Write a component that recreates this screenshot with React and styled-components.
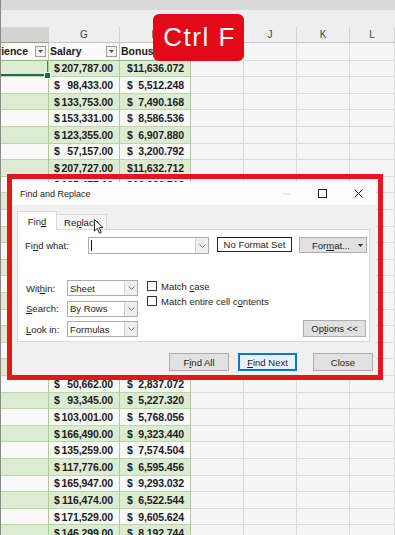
import React from 'react';
import styled, { createGlobalStyle, css } from 'styled-components';

const Global = createGlobalStyle`
  html, body { margin: 0; padding: 0; background: #f3f3f3; overflow: hidden; }
  * { box-sizing: border-box; }
`;

const COLS = '48px 71px 71px 53px 53px 53px 1fr';
const ROW_H = 16.6;

const rows = [
  ['207,787.00', '11,636.072'],
  ['98,433.00', '5,512.248'],
  ['133,753.00', '7,490.168'],
  ['153,331.00', '8,586.536'],
  ['123,355.00', '6,907.880'],
  ['57,157.00', '3,200.792'],
  ['207,727.00', '11,632.712'],
  ['185,477.00', '10,386.712'],
  ['112,640.00', '6,307.840'],
  ['74,915.00', '4,195.240'],
  ['158,302.00', '8,864.912'],
  ['96,780.00', '5,419.680'],
  ['142,055.00', '7,955.080'],
  ['61,430.00', '3,440.080'],
  ['188,210.00', '10,539.760'],
  ['127,905.00', '7,162.680'],
  ['83,615.00', '4,682.440'],
  ['154,720.00', '8,664.320'],
  ['109,338.00', '6,122.928'],
  ['50,662.00', '2,837.072'],
  ['93,345.00', '5,227.320'],
  ['103,001.00', '5,768.056'],
  ['166,490.00', '9,323.440'],
  ['135,259.00', '7,574.504'],
  ['117,776.00', '6,595.456'],
  ['165,947.00', '9,293.032'],
  ['116,474.00', '6,522.544'],
  ['171,529.00', '9,605.624'],
  ['146,299.00', '8,192.744'],
];

const Screen = styled.div`
  position: relative;
  width: 395px;
  height: 535px;
  overflow: hidden;
  background: #f3f3f3;
  font-family: "Liberation Sans", Arial, sans-serif;
`;

/* ---------- spreadsheet ---------- */
const Sheet = styled.div`
  display: flex;
  flex-direction: column;
  border-left: 1px solid #8a8a8a;
`;

const TopStrip = styled.div`
  height: 10px;
  flex: none;
  background: #d9d9d9;
`;

const RibbonGap = styled.div`
  height: 17px;
  flex: none;
  background: #ededed;
`;

const Row = styled.div`
  display: grid;
  grid-template-columns: ${COLS};
  height: ${p => p.$h}px;
  flex: none;
`;

const ColHead = styled.div`
  display: flex;
  align-items: center;
  justify-content: center;
  background: ${p => (p.$active ? '#d3d3d3' : '#eeeeee')};
  border-right: 1px solid #d2d2d2;
  border-bottom: 1px solid ${p => (p.$active ? '#7fae6a' : '#c6c6c6')};
  font-size: 10px;
  color: #444;
`;

const HeadCell = styled.div`
  display: flex;
  align-items: center;
  justify-content: ${p => (p.$clipLeft ? 'flex-end' : 'flex-start')};
  gap: 7px;
  overflow: hidden;
  padding: 0 2px 0 1px;
  background: #fafafa;
  border-right: 1px solid #b5d6a1;
  border-bottom: 1px solid #8fb878;
  font-size: 10.5px;
  font-weight: bold;
  color: #1c1c1c;
  white-space: nowrap;
`;

const HeadText = styled.span`
  flex: none;
  ${p => !p.$clipLeft && css`margin-right: auto;`}
`;

const FilterBtn = styled.span`
  flex: none;
  width: 11px;
  height: 11px;
  border: 1px solid #9c9c9c;
  background: #f1f1f1;
  display: flex;
  align-items: center;
  justify-content: center;
`;

const bandBg = p => (p.$band ? '#dcecd2' : '#f9f9f9');

const TableCell = styled.div`
  position: relative;
  background: ${bandBg};
  border-right: 1px solid #a9d08e;
  border-bottom: 1px solid #b7d9a2;
  ${p =>
    p.$selected &&
    css`
      box-shadow: inset 0 -2px 0 #1f6e43, inset -1px 0 0 #3d8a5c;
      &::after {
        content: '';
        position: absolute;
        right: -3px;
        bottom: -3px;
        width: 5px;
        height: 5px;
        background: #1f6e43;
        border: 1px solid #fff;
        z-index: 2;
      }
    `}
`;

const MoneyCell = styled(TableCell)`
  display: flex;
  align-items: center;
  justify-content: space-between;
  padding: 0 6px 0 ${p => p.$padL}px;
  font-size: 10.5px;
  font-weight: bold;
  letter-spacing: -0.1px;
  color: #1c1c1c;
  white-space: nowrap;
`;

const GridCell = styled.div`
  background: #f5f5f5;
  border-right: 1px solid #d9d9d9;
  border-bottom: 1px solid #dadada;
`;

/* ---------- Ctrl F badge ---------- */
const Badge = styled.div`
  position: absolute;
  left: 153px;
  top: 14px;
  width: 91px;
  height: 47px;
  border-radius: 6px;
  background: #e10a16;
  color: #fff;
  display: flex;
  align-items: center;
  justify-content: center;
  font-size: 26px;
  letter-spacing: 1.5px;
  padding-left: 2px;
`;

/* ---------- dialog ---------- */
const Frame = styled.div`
  position: absolute;
  left: 7px;
  top: 174px;
  width: 376px;
  height: 206px;
  border: 5px solid #e3161e;
  padding: 3px 2px 0 0;
  display: flex;
`;

const Dialog = styled.div`
  flex: 1;
  display: flex;
  flex-direction: column;
  background: #f0f0f0;
  font-size: 9.5px;
  color: #1e1e1e;
`;

const TitleBar = styled.div`
  height: 23px;
  flex: none;
  display: flex;
  align-items: center;
  background: #fdfdfd;
  padding-left: 8px;
`;

const Title = styled.span`
  font-size: 9px;
  margin-right: auto;
`;

const WinCtrl = styled.span`
  width: 36px;
  height: 23px;
  display: flex;
  align-items: center;
  justify-content: center;
`;

const Body = styled.div`
  flex: 1;
  display: flex;
  flex-direction: column;
  padding: 7px 3px 0 5px;
`;

const TabStrip = styled.div`
  display: flex;
  align-items: flex-end;
  height: 18px;
  position: relative;
  z-index: 1;
  margin-bottom: -1px;
`;

const Tab = styled.div`
  display: flex;
  align-items: center;
  justify-content: center;
  width: ${p => p.$w}px;
  height: ${p => (p.$active ? 19 : 16)}px;
  background: ${p => (p.$active ? '#ffffff' : '#f5f5f5')};
  border: 1px solid #d9d9d9;
  border-bottom: ${p => (p.$active ? 'none' : '1px solid #d9d9d9')};
  ${p => !p.$active && css`border-left: none; padding-top: 1px;`}
`;

const Panel = styled.div`
  background: #ffffff;
  border: 1px solid #d9d9d9;
  margin-right: 3px;
  padding: 7px 2px 4px 7px;
  display: flex;
  flex-direction: column;
`;

const FindRow = styled.div`
  display: flex;
  align-items: flex-start;
  height: 17px;
`;

const FieldLabel = styled.span`
  width: ${p => p.$w}px;
  flex: none;
  align-self: center;
  padding-left: ${p => p.$pl || 0}px;
`;

const Combo = styled.div`
  width: ${p => p.$w}px;
  height: ${p => p.$h}px;
  flex: none;
  display: flex;
  align-items: stretch;
  background: #fff;
  border: 1px solid #acacac;
`;

const ComboText = styled.span`
  flex: 1;
  display: flex;
  align-items: center;
  padding-left: 2px;
`;

const Caret = styled.span`
  width: 1px;
  height: 11px;
  background: #111;
`;

const ComboDrop = styled.span`
  width: 13px;
  flex: none;
  display: flex;
  align-items: center;
  justify-content: center;
  background: #eeeeee;
  border-left: 1px solid #d0d0d0;
`;

const NoFormat = styled.div`
  width: 75px;
  height: 15px;
  margin-left: 8px;
  border: 1px solid #222;
  background: #fff;
  display: flex;
  align-items: center;
  justify-content: center;
`;

const Button = styled.div`
  width: ${p => p.$w}px;
  height: ${p => p.$h || 18}px;
  flex: none;
  display: flex;
  align-items: center;
  justify-content: center;
  gap: 4px;
  background: ${p => (p.$default ? '#e5f1fb' : '#e1e1e1')};
  border: 1px solid ${p => (p.$default ? '#0078d7' : '#adadad')};
  ${p => p.$default && css`box-shadow: inset 0 0 0 1px #0078d7;`}
  white-space: nowrap;
`;

const FormatBtn = styled(Button)`
  margin-left: auto;
  justify-content: flex-end;
  padding-right: 3px;
  gap: 8px;
`;

const Lower = styled.div`
  display: flex;
  align-items: flex-end;
  margin-top: 26px;
`;

const OptionGrid = styled.div`
  display: grid;
  grid-template-columns: 42px 71px;
  grid-auto-rows: 16px;
  row-gap: 4.5px;
  align-items: center;
`;

const Checks = styled.div`
  align-self: flex-start;
  margin-left: 9px;
  padding-top: 1px;
  display: flex;
  flex-direction: column;
  gap: 5px;
`;

const CheckRow = styled.label`
  display: flex;
  align-items: center;
  gap: 4px;
  height: 10px;
  white-space: nowrap;
`;

const Box = styled.span`
  width: 10px;
  height: 10px;
  flex: none;
  border: 1px solid #333;
  background: #fff;
`;

const OptionsBtn = styled(Button)`
  margin-left: auto;
  margin-right: 1px;
`;

const Footer = styled.div`
  display: flex;
  justify-content: flex-end;
  margin-top: 11px;
  gap: ${p => p.$gap}px;
`;

const FooterGroup = styled.div`
  display: flex;
  gap: 9px;
`;

const U = styled.span`
  text-decoration: underline;
  text-underline-offset: 1px;
`;

const Pointer = styled.svg`
  position: absolute;
  left: 94px;
  top: 219px;
  z-index: 5;
`;

const Chevron = () => (
  <svg width="7" height="4" viewBox="0 0 7 4">
    <path d="M0.5 0.5 L3.5 3.3 L6.5 0.5" fill="none" stroke="#6a6a6a" strokeWidth="0.9" />
  </svg>
);

const Tri = () => (
  <svg width="5" height="3" viewBox="0 0 5 3">
    <path d="M0 0 H5 L2.5 3 Z" fill="#333" />
  </svg>
);

const FilterTri = () => (
  <svg width="5" height="3" viewBox="0 0 5 3">
    <path d="M0 0 H5 L2.5 3 Z" fill="#555" />
  </svg>
);

const Money = ({ value, band, padL }) => (
  <MoneyCell $band={band} $padL={padL}>
    <span>$</span>
    <span>{value}</span>
  </MoneyCell>
);

export default function App() {
  return (
    <Screen>
      <Global />
      <Sheet>
        <TopStrip />
        <RibbonGap />
        <Row $h={16}>
          <ColHead $active />
          <ColHead>G</ColHead>
          <ColHead>H</ColHead>
          <ColHead>I</ColHead>
          <ColHead>J</ColHead>
          <ColHead>K</ColHead>
          <ColHead>L</ColHead>
        </Row>
        <Row $h={17.7}>
          <HeadCell $clipLeft>
            <HeadText $clipLeft>Experience</HeadText>
            <FilterBtn><FilterTri /></FilterBtn>
          </HeadCell>
          <HeadCell>
            <HeadText>Salary</HeadText>
            <FilterBtn><FilterTri /></FilterBtn>
          </HeadCell>
          <HeadCell>
            <HeadText>Bonus</HeadText>
            <FilterBtn><FilterTri /></FilterBtn>
          </HeadCell>
          <GridCell />
          <GridCell />
          <GridCell />
          <GridCell />
        </Row>
        {rows.map(([salary, bonus], i) => {
          const band = i % 2 === 0;
          return (
            <Row key={i} $h={ROW_H}>
              <TableCell $band={band} $selected={i === 0} />
              <Money value={salary} band={band} padL={5} />
              <Money value={bonus} band={band} padL={7} />
              <GridCell />
              <GridCell />
              <GridCell />
              <GridCell />
            </Row>
          );
        })}
      </Sheet>

      <Badge>Ctrl F</Badge>

      <Frame>
        <Dialog>
          <TitleBar>
            <Title>Find and Replace</Title>
            <WinCtrl>
              <svg width="8" height="2" viewBox="0 0 8 2">
                <path d="M0 1 H8" stroke="#d8d8d8" strokeWidth="1" />
              </svg>
            </WinCtrl>
            <WinCtrl>
              <svg width="9" height="9" viewBox="0 0 9 9">
                <rect x="0.5" y="0.5" width="8" height="8" fill="none" stroke="#222" strokeWidth="1" />
              </svg>
            </WinCtrl>
            <WinCtrl>
              <svg width="9" height="9" viewBox="0 0 9 9">
                <path d="M0.5 0.5 L8.5 8.5 M8.5 0.5 L0.5 8.5" stroke="#222" strokeWidth="1" />
              </svg>
            </WinCtrl>
          </TitleBar>
          <Body>
            <TabStrip>
              <Tab $active $w={40}><span>Fin<U>d</U></span></Tab>
              <Tab $w={50}><span>Re<U>p</U>lace</span></Tab>
            </TabStrip>
            <Panel>
              <FindRow>
                <FieldLabel $w={63}>Fi<U>n</U>d what:</FieldLabel>
                <Combo $w={121} $h={17}>
                  <ComboText><Caret /></ComboText>
                  <ComboDrop><Chevron /></ComboDrop>
                </Combo>
                <NoFormat>No Format Set</NoFormat>
                <FormatBtn $w={68} $h={16}>
                  <span>For<U>m</U>at...</span>
                  <Tri />
                </FormatBtn>
              </FindRow>
              <Lower>
                <OptionGrid>
                  <FieldLabel $pl={1}>Wit<U>h</U>in:</FieldLabel>
                  <Combo $w={71} $h={16}>
                    <ComboText>Sheet</ComboText>
                    <ComboDrop><Chevron /></ComboDrop>
                  </Combo>
                  <FieldLabel $pl={1}><U>S</U>earch:</FieldLabel>
                  <Combo $w={71} $h={16}>
                    <ComboText>By Rows</ComboText>
                    <ComboDrop><Chevron /></ComboDrop>
                  </Combo>
                  <FieldLabel $pl={1}><U>L</U>ook in:</FieldLabel>
                  <Combo $w={71} $h={16}>
                    <ComboText>Formulas</ComboText>
                    <ComboDrop><Chevron /></ComboDrop>
                  </Combo>
                </OptionGrid>
                <Checks>
                  <CheckRow><Box /><span>Match <U>c</U>ase</span></CheckRow>
                  <CheckRow><Box /><span>Match entire cell c<U>o</U>ntents</span></CheckRow>
                </Checks>
                <OptionsBtn $w={63} $h={17}><span>Op<U>t</U>ions &lt;&lt;</span></OptionsBtn>
              </Lower>
            </Panel>
            <Footer $gap={16}>
              <FooterGroup>
                <Button $w={60}><span>F<U>i</U>nd All</span></Button>
                <Button $w={59} $default><span><U>F</U>ind Next</span></Button>
              </FooterGroup>
              <Button $w={60}><span>Close</span></Button>
            </Footer>
          </Body>
        </Dialog>
      </Frame>

      <Pointer width="11" height="16" viewBox="0 0 11 16">
        <path
          d="M0.5 0.5 L0.5 12 L3.3 9.3 L5.4 14.2 L7.3 13.4 L5.2 8.6 L9 8.6 Z"
          fill="#ffffff"
          stroke="#111"
          strokeWidth="0.9"
          strokeLinejoin="round"
        />
      </Pointer>
    </Screen>
  );
}
